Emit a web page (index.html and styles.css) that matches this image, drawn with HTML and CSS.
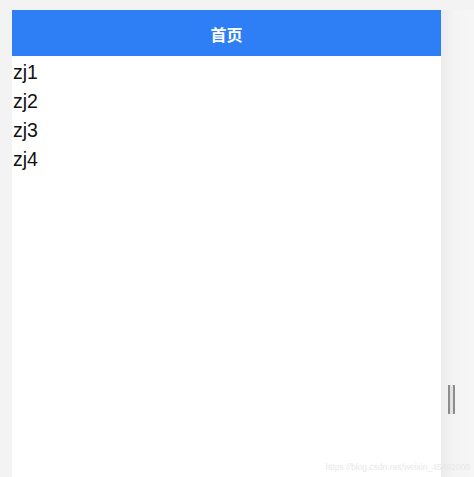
FILE: index.html
```html
<!DOCTYPE html>
<html lang="zh">
<head>
<meta charset="utf-8">
<title>首页</title>
<link rel="stylesheet" href="styles.css">
</head>
<body>
<div class="page">
  <div class="phone">
    <header class="nav">首页</header>
    <ul class="list">
      <li>zj1</li>
      <li>zj2</li>
      <li>zj3</li>
      <li>zj4</li>
    </ul>
  </div>
  <div class="gutter">
    <div class="handle"></div>
  </div>
</div>
<div class="watermark">https://blog.csdn.net/weixin_45492000</div>
</body>
</html>
```
FILE: styles.css
```css
html, body {
  margin: 0;
  padding: 0;
  height: 100%;
  overflow: hidden;
}
body {
  background: #f3f3f3;
  font-family: "Liberation Sans", Arial, "Noto Sans CJK SC", sans-serif;
}
.page {
  display: flex;
  padding: 10px 0 0 12px;
  height: 477px;
  box-sizing: border-box;
}
.phone {
  width: 429px;
  background: #ffffff;
  display: flex;
  flex-direction: column;
}
.nav {
  height: 46px;
  background: #2e7ff6;
  color: #ffffff;
  font-family: "Noto Sans CJK SC", sans-serif;
  font-weight: 700;
  font-size: 16px;
  display: flex;
  align-items: center;
  justify-content: center;
  padding-top: 2px;
  box-sizing: border-box;
}
.list {
  list-style: none;
  margin: 0;
  padding: 2px 0 0 0;
  font-size: 19.5px;
  line-height: 29px;
  color: #111111;
}
.list li {
  padding-left: 1px;
}
.gutter {
  flex: 1;
  background: linear-gradient(to right, #ebebeb, #f4f4f4 40%, #f6f6f6);
  padding-top: 375px;
  box-sizing: border-box;
}
.handle {
  margin-left: 7px;
  width: 3px;
  height: 29px;
  border-left: 2px solid #8c8c8c;
  border-right: 2px solid #8c8c8c;
  background: #e2e2e2;
}
.watermark {
  position: absolute;
  right: 4px;
  top: 462px;
  font-size: 8.5px;
  color: #e8e8e8;
  white-space: nowrap;
}
```
